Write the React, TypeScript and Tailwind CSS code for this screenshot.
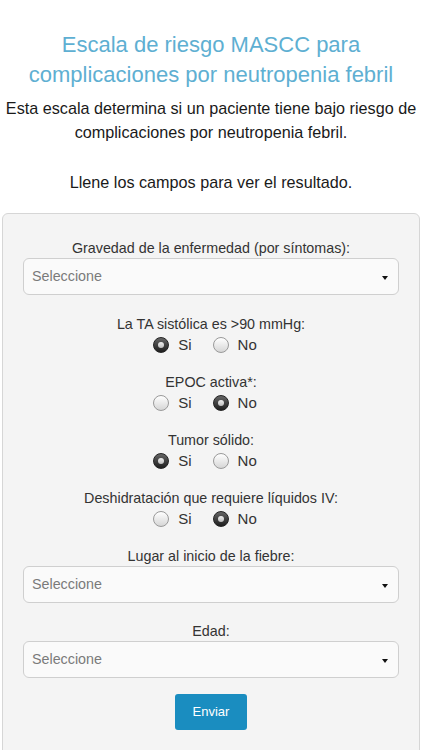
import { useState } from "react";

const font = { fontFamily: '"Liberation Sans", Arial, sans-serif' };

function Select({ label }: { label: string }) {
  return (
    <div className="flex flex-col">
      <p className="text-[14.3px] leading-[20px] text-[#333] text-center">{label}</p>
      <div className="relative h-[37px] rounded-[6px] border border-[#cfcfcf] bg-[#fafafa] flex items-center pl-[8px]">
        <span className="text-[14.3px] text-[#7a7a7a]">Seleccione</span>
        <span className="absolute right-[10px] top-[17px] w-0 h-0 border-l-[3.5px] border-r-[3.5px] border-t-[4px] border-l-transparent border-r-transparent border-t-[#111]" />
      </div>
    </div>
  );
}

function Radio({ checked, onClick }: { checked: boolean; onClick: () => void }) {
  return (
    <span
      onClick={onClick}
      className={
        checked
          ? "w-[16px] h-[16px] rounded-full border border-[#222] bg-gradient-to-b from-[#666] to-[#1f1f1f] flex items-center justify-center"
          : "w-[16px] h-[16px] rounded-full border border-[#9a9a9a] bg-gradient-to-b from-[#ffffff] to-[#d6d6d6]"
      }
    >
      {checked && <span className="w-[6px] h-[6px] rounded-full bg-gradient-to-b from-[#f0f0f0] to-[#bdbdbd]" />}
    </span>
  );
}

function RadioGroup({ label, initial }: { label: string; initial: "si" | "no" }) {
  const [val, setVal] = useState(initial);
  return (
    <div className="flex flex-col mb-[16px]">
      <p className="text-[14.3px] leading-[20px] text-[#333] text-center">{label}</p>
      <div className="flex justify-center items-center gap-[21px] pr-[14px] h-[22px] ml-[2px]">
        <label className="flex items-center gap-[9px]">
          <Radio checked={val === "si"} onClick={() => setVal("si")} />
          <span className="text-[15px] text-[#333]">Si</span>
        </label>
        <label className="flex items-center gap-[9px]">
          <Radio checked={val === "no"} onClick={() => setVal("no")} />
          <span className="text-[15px] text-[#333]">No</span>
        </label>
      </div>
    </div>
  );
}

export default function App() {
  return (
    <div style={font} className="min-h-[750px] bg-white overflow-hidden">
      <h1 className="pt-[30px] text-[22px] leading-[30px] text-[#5eafd2] text-center">
        Escala de riesgo MASCC para
        <br />
        complicaciones por neutropenia febril
      </h1>
      <p className="mt-[6px] text-[16.2px] leading-[24px] text-[#1a1a1a] text-center">
        Esta escala determina si un paciente tiene bajo riesgo de complicaciones por neutropenia febril.
      </p>
      <p className="mt-[26px] text-[16.2px] leading-[24px] text-[#1a1a1a] text-center">
        Llene los campos para ver el resultado.
      </p>
      <div className="mt-[19px] mx-[2px] rounded-t-[6px] border border-[#d6d6d6] bg-[#f4f4f4] px-[20px] pt-[24px] pb-[40px]">
        <div className="mb-[19px]">
          <Select label="Gravedad de la enfermedad (por síntomas):" />
        </div>
        <RadioGroup label="La TA sistólica es >90 mmHg:" initial="si" />
        <RadioGroup label="EPOC activa*:" initial="no" />
        <RadioGroup label="Tumor sólido:" initial="si" />
        <RadioGroup label="Deshidratación que requiere líquidos IV:" initial="no" />
        <div className="mb-[18px]">
          <Select label="Lugar al inicio de la fiebre:" />
        </div>
        <Select label="Edad:" />
        <div className="flex justify-center mt-[16px]">
          <button className="w-[72px] h-[36px] rounded-[3px] bg-[#1a8dc0] text-white text-[13px]">Enviar</button>
        </div>
      </div>
    </div>
  );
}
